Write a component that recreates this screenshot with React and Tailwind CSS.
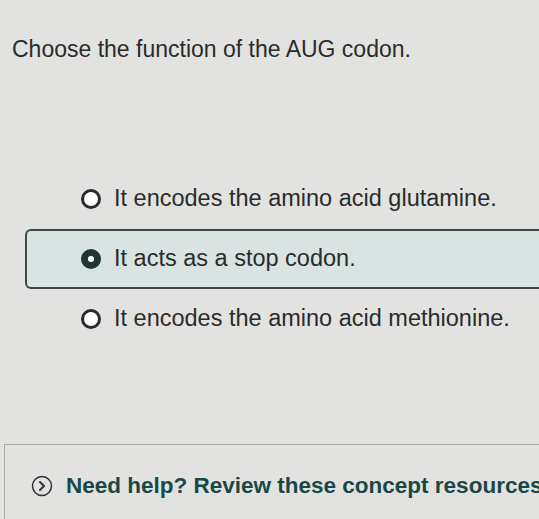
export default function App() {
  const options = [
    { id: 1, label: "It encodes the amino acid glutamine.", selected: false },
    { id: 2, label: "It acts as a stop codon.", selected: true },
    { id: 3, label: "It encodes the amino acid methionine.", selected: false },
  ];

  return (
    <div
      className="w-[539px] h-[519px] overflow-hidden bg-[#e2e3e0] text-[#2a2c2c]"
      style={{ fontFamily: "'Liberation Sans', Arial, sans-serif" }}
    >
      <h1 className="pt-[36px] pl-3 text-[23px] leading-[26px]">
        Choose the function of the AUG codon.
      </h1>

      <div className="mt-[107px] ml-[25px] w-[540px]">
        {options.map((opt) =>
          opt.selected ? (
            <div
              key={opt.id}
              className="h-[60px] flex items-center pl-[54px] gap-[13px] border-2 border-r-0 border-[#3d4848] rounded-l-md bg-[#d9e3e2]"
            >
              <span className="w-5 h-5 rounded-full bg-[#1f3433] flex items-center justify-center">
                <span className="w-[6px] h-[6px] rounded-full bg-white" />
              </span>
              <span className="text-[23.5px]">{opt.label}</span>
            </div>
          ) : (
            <div
              key={opt.id}
              className="h-[60px] flex items-center pl-[56px] gap-[13px]"
            >
              <span className="w-5 h-5 rounded-full border-[3px] border-[#2a2c2c] bg-white" />
              <span className="text-[23.5px]">{opt.label}</span>
            </div>
          )
        )}
      </div>

      <div className="mt-[95px] ml-1 w-[580px] h-[100px] border-t border-l border-[#a9aca9]">
        <div className="flex items-center gap-[13px] pl-[26px] pt-[24px]">
          <svg width="22" height="22" viewBox="0 0 22 22" className="shrink-0">
            <circle cx="11" cy="11" r="9.5" fill="none" stroke="#333" strokeWidth="1.5" />
            <path d="M9 7l4 4-4 4" fill="none" stroke="#333" strokeWidth="2" strokeLinecap="round" strokeLinejoin="round" />
          </svg>
          <span className="text-[22.5px] font-bold text-[#1b4846] whitespace-nowrap">
            Need help? Review these concept resources
          </span>
        </div>
      </div>
    </div>
  );
}
